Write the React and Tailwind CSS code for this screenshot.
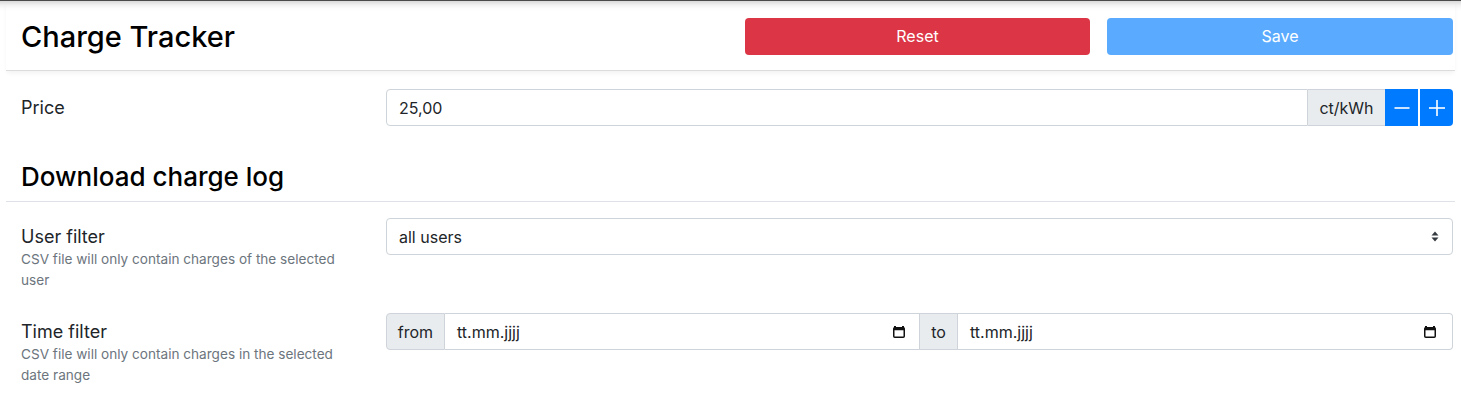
import React from "react";

function CalendarIcon() {
  return (
    <svg width="12" height="13" viewBox="0 0 12 13" className="shrink-0">
      <rect x="1" y="1" width="2" height="2" fill="#111" />
      <rect x="9" y="1" width="2" height="2" fill="#111" />
      <rect x="0.75" y="2.75" width="10.5" height="9.5" rx="1" fill="none" stroke="#111" strokeWidth="1.5" />
      <rect x="0.75" y="2.75" width="10.5" height="2.5" fill="#111" />
    </svg>
  );
}

function SelectArrows() {
  return (
    <svg width="8" height="11" viewBox="0 0 8 11">
      <path d="M4 0.5 L7.5 4.5 H0.5 Z" fill="#343a40" />
      <path d="M4 10.5 L7.5 6.5 H0.5 Z" fill="#343a40" />
    </svg>
  );
}

function Row({ label, desc, children }) {
  return (
    <div className="flex">
      <div className="w-[365px] shrink-0 pt-[7px] pr-[25px]">
        <div className="text-[18px] leading-[24px] text-[#212529]">{label}</div>
        {desc && (
          <div className="text-[13.6px] leading-[21px] text-[#6c757d]">{desc}</div>
        )}
      </div>
      <div className="flex-1">{children}</div>
    </div>
  );
}

export default function App() {
  return (
    <div
      className="min-h-[398px] bg-white border-t border-[#4a4a4a] shadow-[inset_0_10px_10px_-10px_rgba(0,0,0,0.3)] px-[6px] text-[#212529]"
      style={{ fontFamily: 'Inter, "Liberation Sans", Arial, sans-serif' }}
    >
      <div className="flex items-center h-[70px] pl-[15px] pr-[2px] border-b border-[#dcdcdc] shadow-[0_3px_5px_-1px_rgba(0,0,0,0.06)]">
        <h1 className="flex-1 text-[29px] font-medium leading-none text-black mt-[1px]">Charge Tracker</h1>
        <div className="flex gap-[17px] mt-[1px]">
          <button className="w-[345px] h-[37px] rounded-[4px] bg-[#dc3545] text-white text-[16px]">Reset</button>
          <button className="w-[346px] h-[37px] rounded-[4px] bg-[#5aabff] text-white text-[16px]">Save</button>
        </div>
      </div>

      <div className="pl-[15px] pr-[2px] pt-[18px]">
        <div className="flex items-center">
          <div className="w-[365px] shrink-0 text-[18px] leading-[24px]">Price</div>
          <div className="flex flex-1 h-[37px]">
            <div className="flex-1 flex items-center border border-[#ced4da] rounded-l-[4px] px-3 text-[16px]">25,00</div>
            <div className="w-[77px] flex items-center justify-center bg-[#e9ecef] border-y border-[#ced4da] text-[16px]">ct/kWh</div>
            <button className="w-[33px] flex items-center justify-center bg-[#007bff] mr-[2px]">
              <svg width="16" height="16" viewBox="0 0 16 16"><line x1="0.5" y1="8" x2="15.5" y2="8" stroke="white" strokeWidth="1.6" /></svg>
            </button>
            <button className="w-[33px] flex items-center justify-center bg-[#007bff] rounded-r-[4px]">
              <svg width="18" height="18" viewBox="0 0 18 18"><line x1="1" y1="9" x2="17" y2="9" stroke="white" strokeWidth="1.6" /><line x1="9" y1="1" x2="9" y2="17" stroke="white" strokeWidth="1.6" /></svg>
            </button>
          </div>
        </div>
      </div>

      <div className="mt-[35px] pl-[15px] pb-[8px] border-b border-[#dee2e6]">
        <h2 className="text-[26px] font-medium leading-[32px] text-black">Download charge log</h2>
      </div>

      <div className="pl-[15px] pr-[2px] pt-[16px] flex flex-col gap-[22px]">
        <Row label="User filter" desc="CSV file will only contain charges of the selected user">
          <div className="flex items-center justify-between h-[37px] border border-[#ced4da] rounded-[4px] pl-3 pr-[13px] text-[16px]">
            <span>all users</span>
            <SelectArrows />
          </div>
        </Row>
        <Row label="Time filter" desc="CSV file will only contain charges in the selected date range">
          <div className="flex h-[37px] text-[16px]">
            <div className="w-[59px] flex items-center justify-center bg-[#e9ecef] border border-[#ced4da] rounded-l-[4px]">from</div>
            <div className="flex-1 flex items-center justify-between border-y border-[#ced4da] pl-3 pr-[14px]">
              <span>tt.mm.jjjj</span>
              <CalendarIcon />
            </div>
            <div className="w-[39px] flex items-center justify-center bg-[#e9ecef] border border-[#ced4da]">to</div>
            <div className="w-[495px] flex items-center justify-between border-y border-r border-[#ced4da] rounded-r-[4px] pl-3 pr-[16px]">
              <span>tt.mm.jjjj</span>
              <CalendarIcon />
            </div>
          </div>
        </Row>
      </div>
    </div>
  );
}
